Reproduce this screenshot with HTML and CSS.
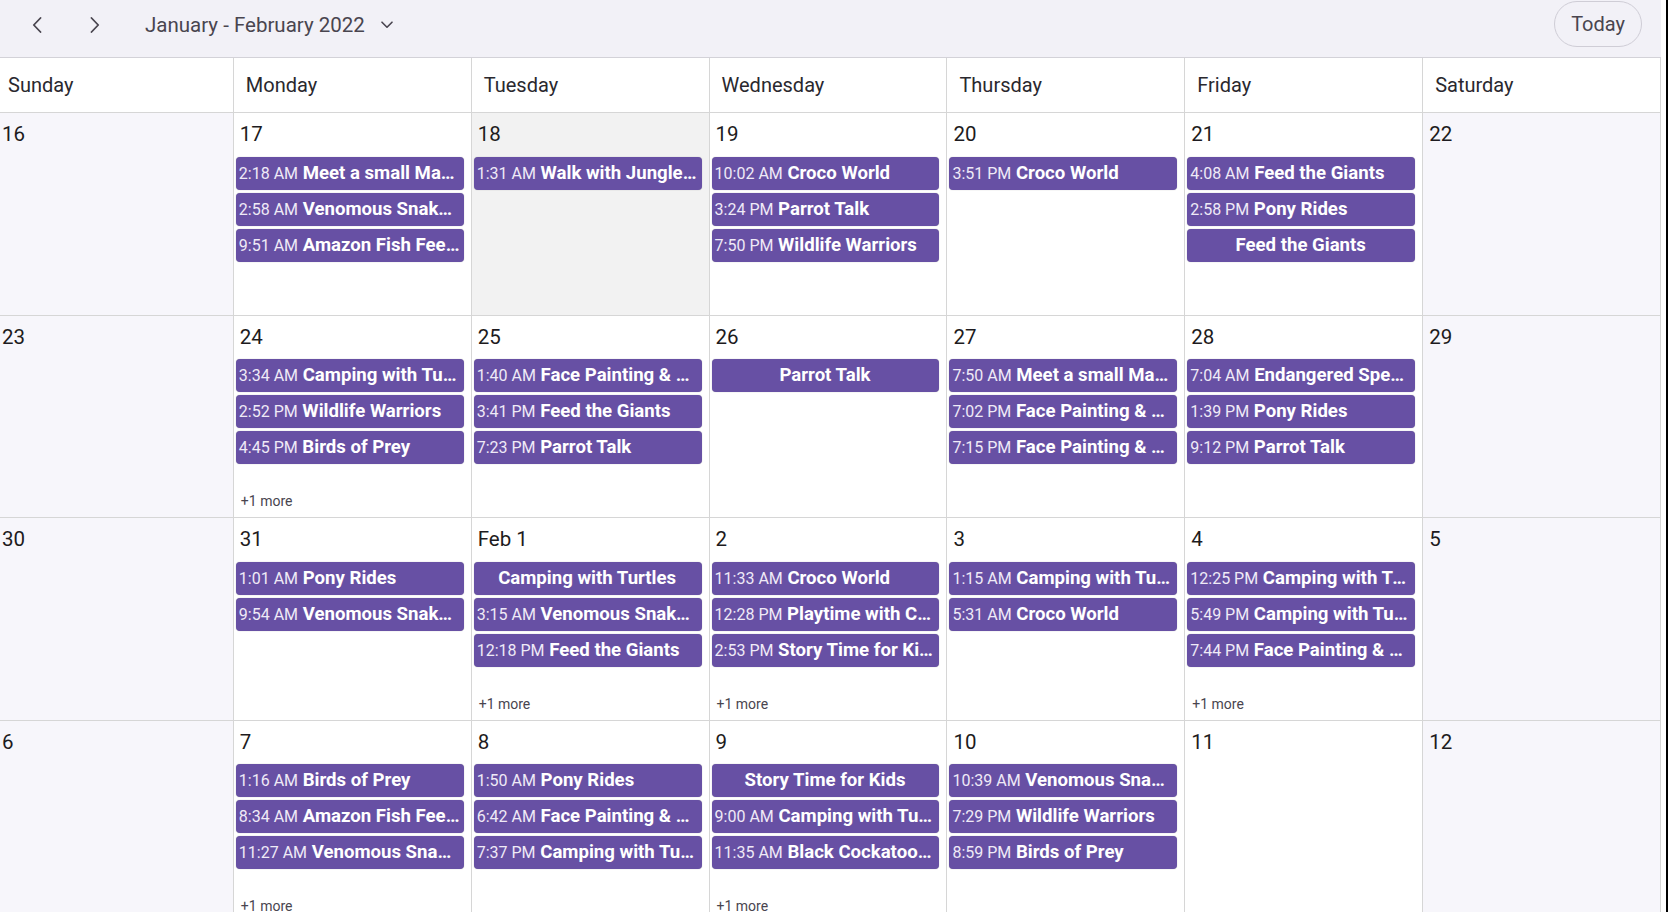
FILE: index.html
```html
<!DOCTYPE html>
<html lang="en">
<head>
<meta charset="utf-8">
<title>Scheduler - Month view</title>
<link rel="stylesheet" href="styles.css">
</head>
<body>
<div class="page">
  <div class="scheduler">
    <div class="toolbar">
      <button class="nav-btn" aria-label="Previous">
        <svg width="10" height="16" viewBox="0 0 10 16"><path d="M8.5 1 L1.8 8 L8.5 15" fill="none" stroke="#49454f" stroke-width="1.8" stroke-linecap="round" stroke-linejoin="round"/></svg>
      </button>
      <button class="nav-btn" aria-label="Next">
        <svg width="10" height="16" viewBox="0 0 10 16"><path d="M1.5 1 L8.2 8 L1.5 15" fill="none" stroke="#49454f" stroke-width="1.8" stroke-linecap="round" stroke-linejoin="round"/></svg>
      </button>
      <div class="title">
        <span>January - February 2022</span>
        <svg width="12" height="8" viewBox="0 0 12 8"><path d="M1 1.2 L6 6.2 L11 1.2" fill="none" stroke="#49454f" stroke-width="1.6" stroke-linecap="round" stroke-linejoin="round"/></svg>
      </div>
      <button class="today">Today</button>
    </div>

    <div class="grid">
      <div class="head">Sunday</div>
      <div class="head">Monday</div>
      <div class="head">Tuesday</div>
      <div class="head">Wednesday</div>
      <div class="head">Thursday</div>
      <div class="head">Friday</div>
      <div class="head">Saturday</div>

      <!-- Week 1 -->
      <div class="cell weekend"><div class="date">16</div></div>
      <div class="cell">
        <div class="date">17</div>
        <div class="ev"><span class="t">2:18 AM</span> Meet a small Mammal</div>
        <div class="ev"><span class="t">2:58 AM</span> Venomous Snake Hunt</div>
        <div class="ev"><span class="t">9:51 AM</span> Amazon Fish Feeding</div>
      </div>
      <div class="cell today-cell">
        <div class="date">18</div>
        <div class="ev"><span class="t">1:31 AM</span> Walk with Jungle King</div>
      </div>
      <div class="cell">
        <div class="date">19</div>
        <div class="ev"><span class="t">10:02 AM</span> Croco World</div>
        <div class="ev"><span class="t">3:24 PM</span> Parrot Talk</div>
        <div class="ev"><span class="t">7:50 PM</span> Wildlife Warriors</div>
      </div>
      <div class="cell">
        <div class="date">20</div>
        <div class="ev"><span class="t">3:51 PM</span> Croco World</div>
      </div>
      <div class="cell">
        <div class="date">21</div>
        <div class="ev"><span class="t">4:08 AM</span> Feed the Giants</div>
        <div class="ev"><span class="t">2:58 PM</span> Pony Rides</div>
        <div class="ev center">Feed the Giants</div>
      </div>
      <div class="cell weekend"><div class="date">22</div></div>

      <!-- Week 2 -->
      <div class="cell weekend"><div class="date">23</div></div>
      <div class="cell">
        <div class="date">24</div>
        <div class="ev"><span class="t">3:34 AM</span> Camping with Turtles</div>
        <div class="ev"><span class="t">2:52 PM</span> Wildlife Warriors</div>
        <div class="ev"><span class="t">4:45 PM</span> Birds of Prey</div>
        <div class="more">+1 more</div>
      </div>
      <div class="cell">
        <div class="date">25</div>
        <div class="ev"><span class="t">1:40 AM</span> Face Painting &amp; Drawing events</div>
        <div class="ev"><span class="t">3:41 PM</span> Feed the Giants</div>
        <div class="ev"><span class="t">7:23 PM</span> Parrot Talk</div>
      </div>
      <div class="cell">
        <div class="date">26</div>
        <div class="ev center">Parrot Talk</div>
      </div>
      <div class="cell">
        <div class="date">27</div>
        <div class="ev"><span class="t">7:50 AM</span> Meet a small Mammal</div>
        <div class="ev"><span class="t">7:02 PM</span> Face Painting &amp; Drawing events</div>
        <div class="ev"><span class="t">7:15 PM</span> Face Painting &amp; Drawing events</div>
      </div>
      <div class="cell">
        <div class="date">28</div>
        <div class="ev"><span class="t">7:04 AM</span> Endangered Species Program</div>
        <div class="ev"><span class="t">1:39 PM</span> Pony Rides</div>
        <div class="ev"><span class="t">9:12 PM</span> Parrot Talk</div>
      </div>
      <div class="cell weekend"><div class="date">29</div></div>

      <!-- Week 3 -->
      <div class="cell weekend"><div class="date">30</div></div>
      <div class="cell">
        <div class="date">31</div>
        <div class="ev"><span class="t">1:01 AM</span> Pony Rides</div>
        <div class="ev"><span class="t">9:54 AM</span> Venomous Snake Hunt</div>
      </div>
      <div class="cell">
        <div class="date">Feb 1</div>
        <div class="ev center">Camping with Turtles</div>
        <div class="ev"><span class="t">3:15 AM</span> Venomous Snake Hunt</div>
        <div class="ev"><span class="t">12:18 PM</span> Feed the Giants</div>
        <div class="more">+1 more</div>
      </div>
      <div class="cell">
        <div class="date">2</div>
        <div class="ev"><span class="t">11:33 AM</span> Croco World</div>
        <div class="ev"><span class="t">12:28 PM</span> Playtime with Chimpanzees</div>
        <div class="ev"><span class="t">2:53 PM</span> Story Time for Kids</div>
        <div class="more">+1 more</div>
      </div>
      <div class="cell">
        <div class="date">3</div>
        <div class="ev"><span class="t">1:15 AM</span> Camping with Turtles</div>
        <div class="ev"><span class="t">5:31 AM</span> Croco World</div>
      </div>
      <div class="cell">
        <div class="date">4</div>
        <div class="ev"><span class="t">12:25 PM</span> Camping with Turtles</div>
        <div class="ev"><span class="t">5:49 PM</span> Camping with Turtles</div>
        <div class="ev"><span class="t">7:44 PM</span> Face Painting &amp; Drawing events</div>
        <div class="more">+1 more</div>
      </div>
      <div class="cell weekend"><div class="date">5</div></div>

      <!-- Week 4 -->
      <div class="cell weekend"><div class="date">6</div></div>
      <div class="cell">
        <div class="date">7</div>
        <div class="ev"><span class="t">1:16 AM</span> Birds of Prey</div>
        <div class="ev"><span class="t">8:34 AM</span> Amazon Fish Feeding</div>
        <div class="ev"><span class="t">11:27 AM</span> Venomous Snake Hunt</div>
        <div class="more">+1 more</div>
      </div>
      <div class="cell">
        <div class="date">8</div>
        <div class="ev"><span class="t">1:50 AM</span> Pony Rides</div>
        <div class="ev"><span class="t">6:42 AM</span> Face Painting &amp; Drawing events</div>
        <div class="ev"><span class="t">7:37 PM</span> Camping with Turtles</div>
      </div>
      <div class="cell">
        <div class="date">9</div>
        <div class="ev center">Story Time for Kids</div>
        <div class="ev"><span class="t">9:00 AM</span> Camping with Turtles</div>
        <div class="ev"><span class="t">11:35 AM</span> Black Cockatoos Playtime</div>
        <div class="more">+1 more</div>
      </div>
      <div class="cell">
        <div class="date">10</div>
        <div class="ev"><span class="t">10:39 AM</span> Venomous Snake Hunt</div>
        <div class="ev"><span class="t">7:29 PM</span> Wildlife Warriors</div>
        <div class="ev"><span class="t">8:59 PM</span> Birds of Prey</div>
      </div>
      <div class="cell"><div class="date">11</div></div>
      <div class="cell weekend"><div class="date">12</div></div>
    </div>
  </div>
  <div class="edge"></div>
</div>
</body>
</html>
```

FILE: styles.css
```css
* {
  box-sizing: border-box;
}

html,
body {
  margin: 0;
  padding: 0;
}

body {
  height: 912px;
  overflow: hidden;
  background: #ffffff;
  font-family: Roboto, "Noto Sans", "Liberation Sans", sans-serif;
  color: #1d1b20;
}

.page {
  display: flex;
  height: 912px;
}

.scheduler {
  width: 1661px;
  height: 912px;
  overflow: hidden;
  display: flex;
  flex-direction: column;
  flex: none;
}

.edge {
  margin-left: auto;
  width: 2px;
  background: #000000;
}

/* Toolbar */
.toolbar {
  flex: none;
  height: 58px;
  display: flex;
  align-items: flex-start;
  padding: 2px 19px 0 17px;
  background: #f2f1f7;
  border-bottom: 1px solid #d3d2d8;
}

.nav-btn {
  width: 40px;
  height: 46px;
  padding: 0;
  border: 0;
  background: none;
  display: flex;
  align-items: center;
  justify-content: center;
}

.nav-btn + .nav-btn {
  margin-left: 18px;
}

.title {
  margin-left: 30px;
  height: 46px;
  display: flex;
  align-items: center;
  gap: 16px;
  font-size: 20.5px;
  color: #49454f;
}

.today {
  margin-left: auto;
  margin-top: -1px;
  height: 46px;
  padding: 0 16px;
  border: 1px solid #cfcdd6;
  border-radius: 23px;
  background: transparent;
  font-family: Roboto, "Noto Sans", sans-serif;
  font-size: 20px;
  color: #49454f;
}

/* Month grid */
.grid {
  margin-left: -4px;
  width: 1665px;
  display: grid;
  grid-template-columns: repeat(7, 1fr);
  grid-template-rows: 55px;
  grid-auto-rows: 202.5px;
}

.head {
  height: 55px;
  line-height: 54px;
  padding-left: 12px;
  font-size: 20px;
  color: #2a282e;
  background: #ffffff;
  border-right: 1px solid #d6d6d6;
  border-bottom: 1px solid #d6d6d6;
}

.cell {
  height: 202.5px;
  min-width: 0;
  display: flex;
  flex-direction: column;
  padding: 9px 7px 6px 2px;
  background: #ffffff;
  border-right: 1px solid #d6d6d6;
  border-bottom: 1px solid #d6d6d6;
}

.cell.weekend {
  background: #f7f6fb;
}

.cell.today-cell {
  background: #f2f2f2;
}

.date {
  height: 24px;
  line-height: 24px;
  padding-left: 4px;
  margin-bottom: 10.5px;
  font-size: 20.5px;
  color: #1d1b20;
  flex: none;
}

.ev {
  flex: none;
  height: 33px;
  margin-bottom: 3px;
  padding: 0 4px 0 3px;
  border-radius: 4px;
  background: #6750a4;
  box-shadow: 0 0 1px rgba(0, 0, 0, 0.35);
  color: #ffffff;
  font-size: 18.6px;
  font-weight: 700;
  line-height: 33px;
  white-space: nowrap;
  overflow: hidden;
  text-overflow: ellipsis;
}

.ev.center {
  text-align: center;
}

.ev .t {
  font-size: 16px;
  font-weight: 400;
  color: #efeaf7;
}

.more {
  margin-top: auto;
  padding-left: 5px;
  font-size: 14px;
  line-height: 20px;
  color: #49454f;
}
```
